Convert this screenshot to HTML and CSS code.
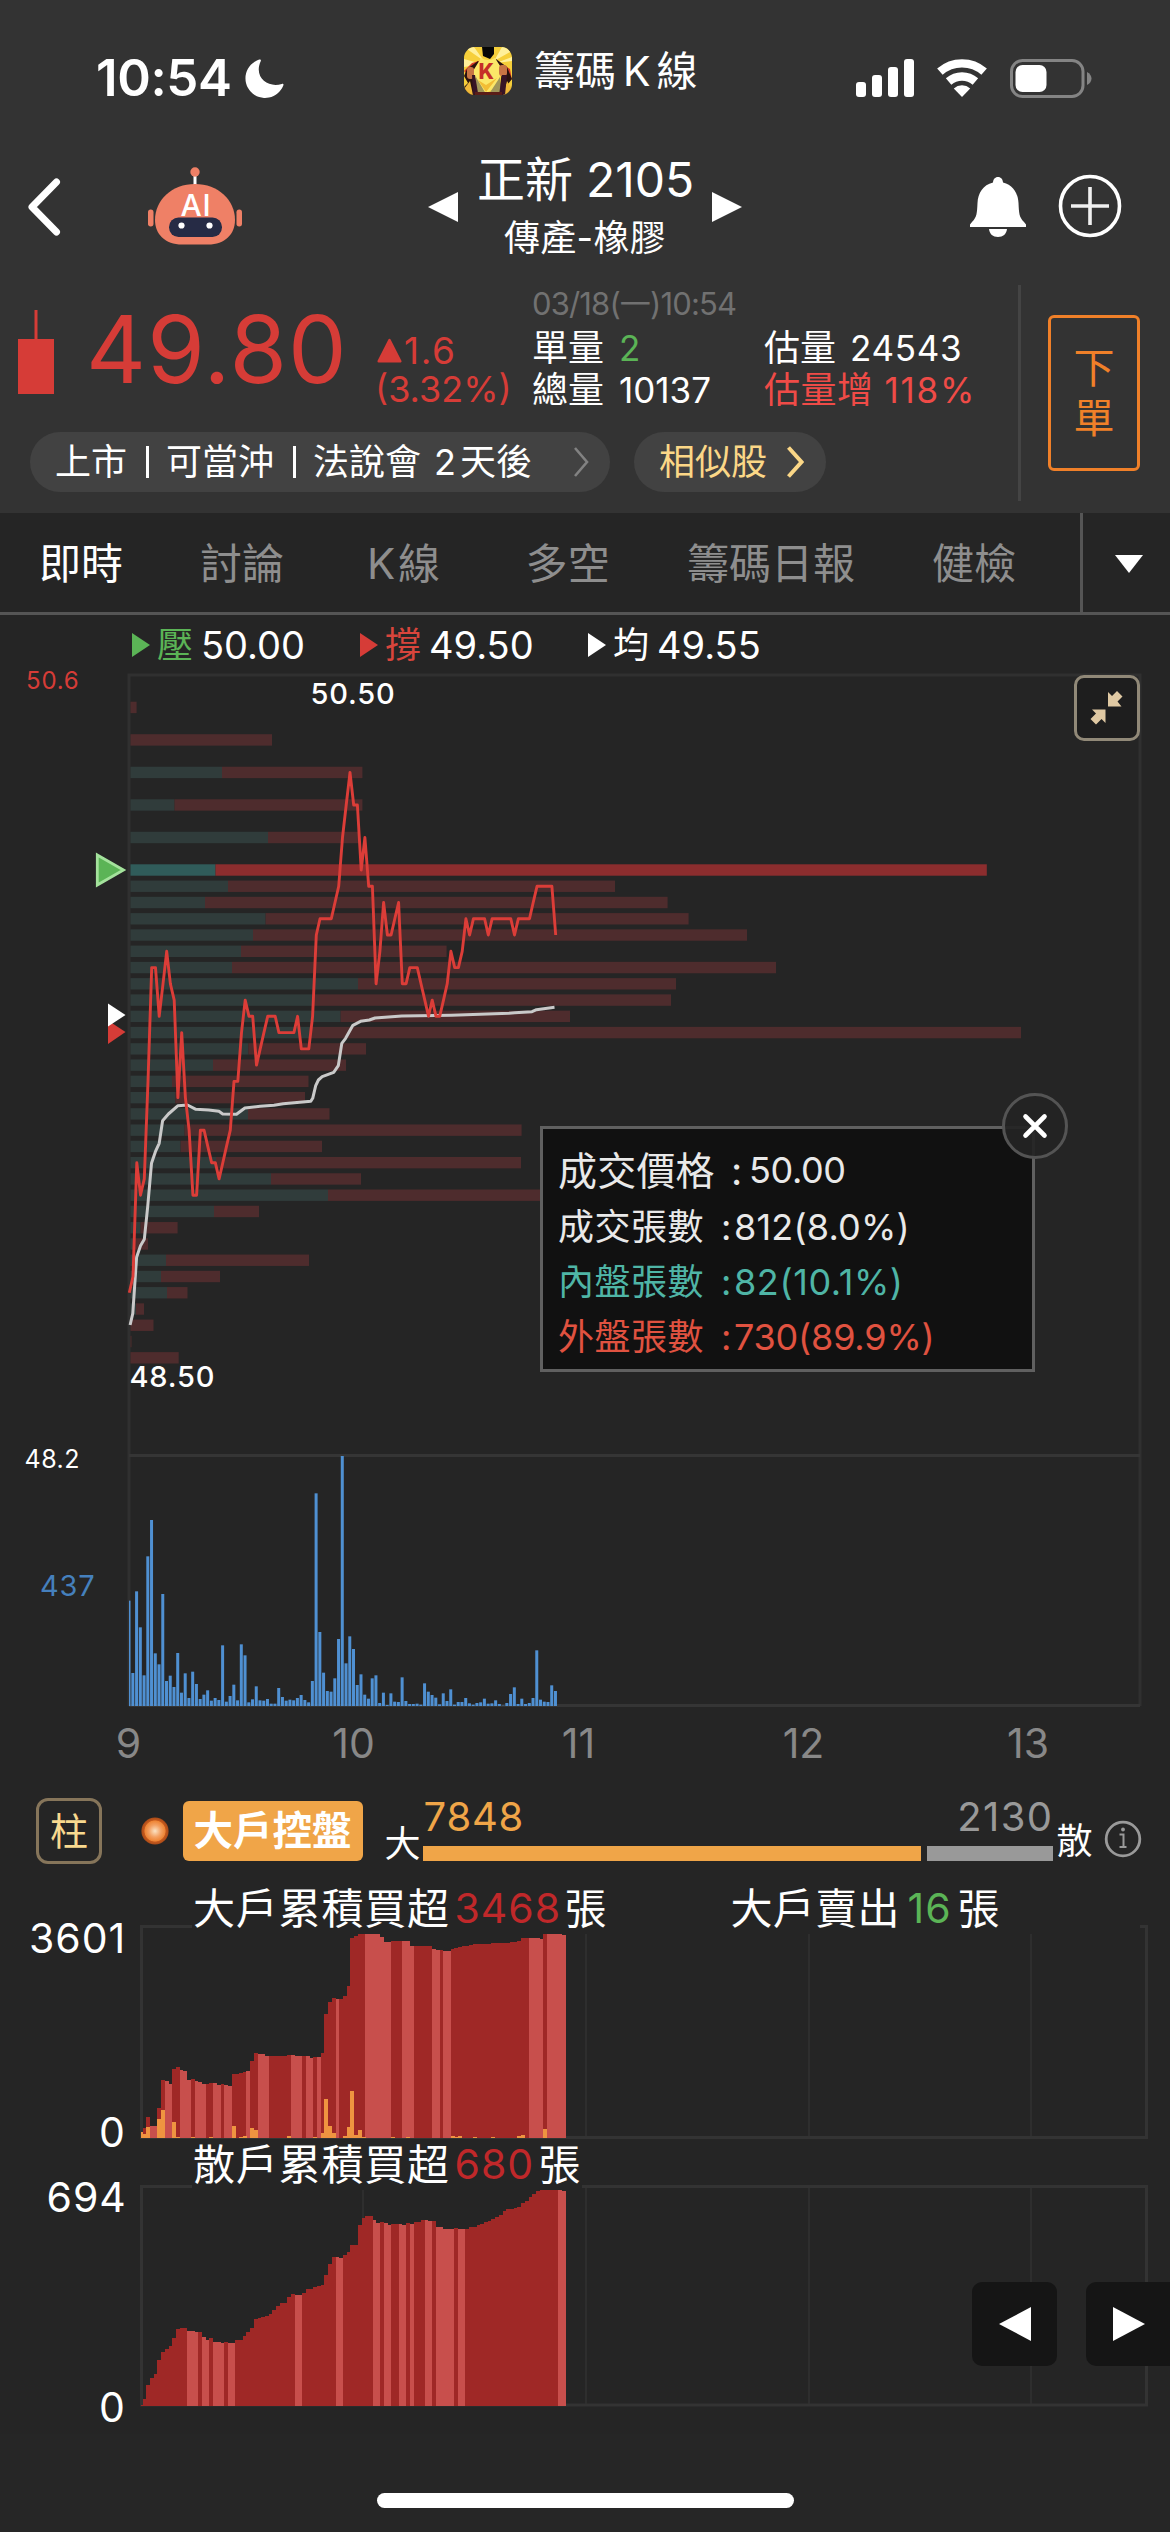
FILE: index.html
```html
<!DOCTYPE html>
<html lang="zh-Hant">
<head>
<meta charset="utf-8">
<title>正新 2105</title>
<link rel="stylesheet" href="styles.css">
</head>
<body>
<header class="top">
  <div class="status">
    <div class="status-left">
      <span class="clock">10:54</span>
      <svg class="moon" viewBox="0 0 39 39"><path d="M14.2.6A19.6 19.6 0 1 0 38.4 26.2C38.8 25.2 38 24.4 36.8 24.9 24 29.500 8 19 15.800 2 16.200 1 15.400.1 14.200.6Z" fill="#fff"/></svg>
    </div>
    <div class="app-name">
      <svg class="app-icon" viewBox="0 0 48 48">
        <defs><clipPath id="appClip"><rect width="48" height="48" rx="11"/></clipPath></defs>
        <g clip-path="url(#appClip)">
          <rect width="48" height="48" fill="#f6cf3a"/>
          <path d="M0 0H10L20 14ZM0 12L18 17 0 20ZM38 0H48V4L30 14ZM48 10V14L32 16Z" fill="#fff09a"/>
          <path d="M2 26L18 13 8 16 0 24ZM30 12L46 22 48 33 40 22Z" fill="#d63a25"/>
          <path d="M0 29L3 22 14 14 17 18 10 25 12 48H0V40L4 36ZM48 32L43 20 32 12 31 17 38 24 35 48H48V44L44 37Z" fill="#2a120f"/>
          <path d="M0 42L6 34 9 48H0ZM48 42L43 34 39 48H48Z" fill="#f0b93a"/>
          <path d="M17 11Q24 15 31 11L38 22 33 40 22 46 13 38 9 24Z" fill="#fbe768"/>
          <path d="M12 30L22 47H10ZM36 30L25 47H37Z" fill="#a0975a"/>
          <path d="M14 33L22 45 33 31 22 38Z" fill="#f2bd35"/>
          <path d="M18 0H30V7L26 12 19 9Z" fill="#070707"/>
          <rect x="3" y="20" width="7" height="12" rx="3" fill="#c87444"/>
          <rect x="35" y="18" width="8" height="11" rx="3" fill="#c87444"/>
          <path d="M38 28H43L41 48H35Z" fill="#371426"/><path d="M8 28H11L14 46 9 48Z" fill="#371426"/>
          <path d="M11 45H38V48H11Z" fill="#5a1d18"/>
          <text x="22.300" y="31.500" class="icon-k">K</text>
        </g>
      </svg>
      <span>籌碼<i>K</i>線</span>
    </div>
    <div class="status-right">
      <svg class="signal" viewBox="0 0 58 38"><g fill="#fff"><rect y="23" width="10" height="15" rx="3"/><rect x="16" y="16" width="10" height="22" rx="3"/><rect x="32" y="8" width="10" height="30" rx="3"/><rect x="48" width="10" height="38" rx="3"/></g></svg>
      <svg class="wifi" viewBox="0 0 50 38"><path d="M2.900 12.600A33.700 33.700 0 0 1 47.100 12.600M11.600 22.500A20.500 20.500 0 0 1 38.400 22.500" fill="none" stroke="#fff" stroke-width="8.400"/><path d="M25 38L16.800 29.400A12.500 12.500 0 0 1 33.200 29.400Z" fill="#fff"/></svg>
      <svg class="battery" viewBox="0 0 82 39"><rect x="1.500" y="1.500" width="71.500" height="36" rx="11" fill="none" stroke="#848484" stroke-width="3"/><rect x="5.500" y="6" width="31" height="27" rx="7" fill="#fff"/><path d="M77 13C83 16 83 23 77 26Z" fill="#848484"/></svg>
    </div>
  </div>

  <nav class="navbar">
    <svg class="back" viewBox="0 0 34 58"><path d="M29.500 4L5 29 29.500 54" fill="none" stroke="#fff" stroke-width="7" stroke-linecap="round" stroke-linejoin="round"/></svg>
    <svg class="robot" viewBox="0 0 94 78">
      <rect x="45.500" y="6" width="3" height="13" fill="#fff"/><circle cx="47" cy="5" r="4.700" fill="#ef8066"/>
      <path d="M47 17C70 17 87 33 87 53 87 67 77 77.500 60 77.500H34C17 77.500 7 67 7 53 7 33 24 17 47 17Z" fill="#ef8066"/>
      <rect y="42.500" width="5.500" height="17" rx="2.700" fill="#ef8066"/><rect x="88.500" y="42.500" width="5.500" height="17" rx="2.700" fill="#ef8066"/>
      <rect x="21" y="50.500" width="53" height="19.500" rx="9.500" fill="#262b45"/>
      <circle cx="33.500" cy="58.500" r="3.100" fill="#fff"/><circle cx="61.500" cy="58.500" r="3.100" fill="#fff"/>
      <text x="32.500" y="48.500" class="robot-ai">AI</text>
    </svg>
    <svg class="prev" viewBox="0 0 30 30"><path d="M30 0V30L0 15Z" fill="#fff"/></svg>
    <div class="title">
      <h1><span class="stock-name">正新</span><span>2105</span></h1>
      <p>傳產-橡膠</p>
    </div>
    <svg class="next" viewBox="0 0 30 30"><path d="M0 0V30L30 15Z" fill="#fff"/></svg>
    <svg class="bell" viewBox="0 0 58 60"><path d="M29 0C32 0 33.800 2.300 34 5.500 44 8 49 16 49.500 26 50 36 50 40 55 45L57 47.500V50H1V47.500L3 45C8 40 8 36 8.500 26 9 16 14 8 24 5.500 24.200 2.300 26 0 29 0ZM20 52H38C37.500 57 34 60 29 60 24 60 20.500 57 20 52Z" fill="#fff"/></svg>
    <svg class="add" viewBox="0 0 64 64"><circle cx="32" cy="32" r="29.500" fill="none" stroke="#fff" stroke-width="3.600"/><path d="M13 32H51M32 13V51" stroke="#f0f0f0" stroke-width="3.600"/></svg>
  </nav>

  <section class="quote">
    <div class="quote-main">
      <div class="quote-row">
        <svg class="candle" viewBox="0 0 36 84"><path d="M16.500 0H19.500V29H36V84H0V29H16.500Z" fill="#d63c37"/></svg>
        <span class="price">49.80</span>
        <div class="change">
          <div class="change-row"><svg viewBox="0 0 25 25"><path d="M12.500 2L23.300 23.300H1.700Z" fill="#d63c37" stroke="#d63c37" stroke-width="2.500" stroke-linejoin="round"/></svg><span class="diff">1.6</span></div>
          <div class="pct">(3.32%)</div>
        </div>
        <div class="info">
          <div class="date">03/18(一)10:54</div>
          <div class="info-row"><div><b>單量</b><span class="green">2</span></div><div><b>估量</b><span class="est">24543</span></div></div>
          <div class="info-row"><div><b>總量</b><span>10137</span></div><div class="rise"><b>估量增</b><span>118%</span></div></div>
        </div>
      </div>
      <div class="pills">
        <div class="pill tags"><span>上市</span><i class="bar"></i><span>可當沖</span><i class="bar"></i><span>法說會</span><span class="days">2</span><span>天後</span>
          <svg class="chev" viewBox="0 0 17 32"><path d="M2 2L14 16 2 30" fill="none" stroke="#828282" stroke-width="2.600"/></svg></div>
        <div class="pill similar"><span>相似股</span><svg class="chev" viewBox="0 0 17 32"><path d="M1.500 1.500L14.500 16 1.500 30.500" fill="none" stroke="#fbd787" stroke-width="4"/></svg></div>
      </div>
    </div>
    <div class="rule"></div>
    <button class="order">下<br>單</button>
  </section>
</header>

<nav class="tabs">
  <a class="active">即時</a><a>討論</a><a class="tab-k">K線</a><a>多空</a><a>籌碼日報</a><a class="last">健檢</a>
  <div class="more"><svg viewBox="0 0 28 18"><path d="M0 0H28L14 18Z" fill="#fff"/></svg></div>
</nav>

<div class="legend">
  <div class="legend-item"><svg viewBox="0 0 18 24"><path d="M0 0L18 12 0 24Z" fill="#5bb456"/></svg><b class="green">壓</b><span>50.00</span></div>
  <div class="legend-item"><svg viewBox="0 0 18 24"><path d="M0 0L18 12 0 24Z" fill="#d63c37"/></svg><b class="red">撐</b><span>49.50</span></div>
  <div class="legend-item"><svg viewBox="0 0 18 24"><path d="M0 0L18 12 0 24Z" fill="#fff"/></svg><b>均</b><span>49.55</span></div>
</div>

<section class="intraday">
  <svg class="plot" viewBox="0 673 1170 1117">
    <g fill="none" stroke="#303030" stroke-width="3">
      <path d="M129 1706V675H1140V1706"/>
    </g>
    <path d="M129 1455.500H1140M129 1705.500H1140" stroke="#353535" stroke-width="3"/>
    <g id="levels"></g>
    <g id="volume" fill="#4f90d2"></g>
    <path id="average" fill="none" stroke="#c9c9c9" stroke-width="3" stroke-linejoin="round"/>
    <path id="priceLine" fill="none" stroke="#dc3d38" stroke-width="2.900" stroke-linejoin="round"/>
    <path d="M108 1020.500L125.500 1032 108 1044Z" fill="#d63c37"/>
    <path d="M108 1003.500L125.500 1015 108 1026.500Z" fill="#fff"/>
    <path d="M97.300 855L123.500 870 97.300 885Z" fill="#5bb456" stroke="#a4e29c" stroke-width="2.800"/>
    <text class="s24 red" x="26" y="689">50.6</text>
    <text class="s29" x="310.500" y="703.500">50.50</text>
    <text class="s29" x="129.500" y="1386.500">48.50</text>
    <text class="s25" x="24.500" y="1467.500">48.2</text>
    <text class="s29 blue" x="40" y="1596">437</text>
    <g class="hours"><text x="128.500" y="1758">9</text><text x="353.500" y="1758">10</text><text x="578.500" y="1758">11</text><text x="803.500" y="1758">12</text><text x="1028" y="1758">13</text></g>
  </svg>
  <button class="shrink"><svg viewBox="0 0 34 34"><g fill="#e0c9a3"><path d="M18 1L22 5 27 0 32.500 5.500 27.500 10.500 31.500 15.500H18Z"/><path d="M15.500 32L11.500 28 6 33.500.5 28 6 22.500 2 18.500H15.500Z"/></g></svg></button>
  <div class="tip">
    <div class="tip-row first"><b>成交價格</b><i>:</i><span>50.00</span></div>
    <div class="tip-row"><b>成交張數</b><i>:</i><span>812(8.0%)</span></div>
    <div class="tip-row teal"><b>內盤張數</b><i>:</i><span class="inner">82(10.1%)</span></div>
    <div class="tip-row coral"><b>外盤張數</b><i>:</i><span>730(89.9%)</span></div>
    <button class="close"><svg viewBox="0 0 26 26"><path d="M3.500 3.500L22.500 22.500M22.500 3.500L3.500 22.500" stroke="#fff" stroke-width="4.600" stroke-linecap="round"/></svg></button>
  </div>
</section>

<section class="control">
  <button class="bars-btn">柱</button>
  <svg class="dot" viewBox="0 0 28 28"><defs><radialGradient id="glow"><stop offset="0" stop-color="#fbe3c4"/><stop offset=".45" stop-color="#f3a062"/><stop offset=".75" stop-color="#ee8434"/><stop offset=".8" stop-color="#c5591d"/><stop offset="1" stop-color="#a84a18"/></radialGradient></defs><circle cx="14" cy="14" r="13.600" fill="url(#glow)"/></svg>
  <span class="badge">大戶控盤</span>
  <span class="side big">大</span>
  <div class="meter">
    <div class="meter-values"><span class="amber">7848</span><span class="gray">2130</span></div>
    <div class="meter-bar"><i class="fill-big"></i><i class="fill-small"></i></div>
  </div>
  <span class="side small">散</span>
  <svg class="info-icon" viewBox="0 0 38 38"><circle cx="19" cy="19" r="16.800" fill="none" stroke="#9a9a9a" stroke-width="2.800"/><circle cx="19" cy="9.500" r="1.900" fill="#9a9a9a"/><path d="M15.500 14.500H19.500V26.500M15.500 27H22.500" fill="none" stroke="#9a9a9a" stroke-width="2"/></svg>
</section>

<section class="flows">
  <svg class="plot" viewBox="0 1872 1170 562">
    <g fill="none" stroke="#333" stroke-width="3">
      <path d="M192 1926.500H141.500V2137.500H1146.500V1926.500H1140"/>
      <path d="M192 2186.500H141.500V2405H1146.500V2186.500H582"/>
    </g>
    <path d="M586 1934V2136M809 1934V2136M1031 1934V2136M363 2190V2404M586 2188V2404M809 2188V2404M1031 2188V2404" stroke="#303030" stroke-width="1.800"/>
    <g id="bigFlow" shape-rendering="crispEdges"></g>
    <g id="smallFlow" shape-rendering="crispEdges"></g>
    <g class="s42">
      <text x="193" y="1924" textLength="256">大戶累積買超</text>
      <text x="564.500" y="1924">張</text>
      <text x="730.500" y="1924" textLength="169">大戶賣出</text>
      <text x="957.500" y="1924">張</text>
      <text x="193" y="2180" textLength="256">散戶累積買超</text>
      <text x="538.500" y="2180">張</text>
    </g>
    <g class="s41">
      <text class="crimson" x="454.500" y="1923">3468</text>
      <text class="green" x="907.500" y="1923">16</text>
      <text class="crimson" x="454.500" y="2179">680</text>
      <text x="29" y="1953">3601</text>
      <text x="99" y="2146.500">0</text>
      <text x="46.500" y="2212">694</text>
      <text x="99" y="2421.500">0</text>
    </g>
  </svg>
  <div class="pager">
    <button><svg viewBox="0 0 32 34"><path d="M32 0V34L0 17Z" fill="#fff"/></svg></button>
    <button><svg viewBox="0 0 32 34"><path d="M0 0V34L32 17Z" fill="#fff"/></svg></button>
  </div>
</section>

<footer class="home"><i></i></footer>
<script src="charts.js"></script>
</body>
</html>
```
FILE: styles.css
```css
* { box-sizing: border-box; margin: 0; padding: 0; }
html, body { width: 1170px; }
body {
  height: 2532px; overflow: hidden; background: #252525; color: #fff;
  font-family: Inter, "Noto Sans CJK TC", sans-serif; font-weight: 400;
  display: flex; flex-direction: column;
}
svg { display: block; flex: none; }
i { font-style: normal; }
b { font-weight: 400; }
button { font: inherit; color: inherit; background: none; border: 0; }
span, b { white-space: nowrap; }

.green { color: #5bb456; fill: #5bb456; }
.red { color: #d9453c; fill: #d63c37; }

.top { background: #333; height: 513px; flex: none; }

/* status bar */
.status { height: 156px; display: grid; grid-template-columns: 464px 392px 1fr; align-items: center; }
.status-left { display: flex; align-items: center; padding-left: 96px; gap: 11px; }
.clock { width: 138px; font-size: 51px; line-height: 60px; font-weight: 600; letter-spacing: -.4px; }
.moon { width: 39px; height: 39px; }
.app-name { display: flex; align-items: center; gap: 22px; margin-bottom: 15px; font-size: 41px; line-height: 48px; }
.app-icon { width: 48px; height: 48px; }
.app-name i { margin: 0 6px 0 7px; }
.icon-k { font: 800 21px Inter, sans-serif; text-anchor: middle; fill: #c62f28; }
.status-right { display: flex; align-items: center; }
.signal { width: 58px; height: 38px; }
.wifi { width: 50px; height: 38px; margin-left: 22.500px; }
.battery { width: 82px; height: 39px; margin-left: 23px; }

/* title bar */
.navbar { height: 104px; display: flex; align-items: center; }
.back { width: 34px; height: 58px; margin: 0 0 3px 27px; }
.robot { width: 94px; height: 78px; margin: 0 0 5px 87px; }
.robot-ai { font: 500 30px Inter, sans-serif; fill: #fff; letter-spacing: .7px; }
.prev { width: 30px; height: 30px; margin: 0 0 3px 186px; }
.title { width: 254px; text-align: center; }
.title h1 { font-size: 48px; line-height: 60px; font-weight: 400; display: flex; padding-left: 19px; gap: 13px; }
.title p { font-size: 36px; line-height: 56px; letter-spacing: .3px; }
.next { width: 30px; height: 30px; margin-bottom: 3px; }
.bell { width: 58px; height: 60px; margin: 0 0 2px 227px; }
.add { width: 64px; height: 64px; margin: 0 0 4px 31px; }

/* quote */
.quote { height: 253px; display: grid; grid-template-columns: 1018px 3px 1fr; padding-top: 24px; }
.quote-row { height: 148px; display: flex; }
.candle { width: 36px; height: 84px; margin: 26px 0 0 18px; }
.price { width: 291px; margin-left: 32px; font-size: 93px; line-height: 130px; letter-spacing: 1.100px; color: #d63c37; }
.change { width: 155px; padding-top: 47px; color: #d63c37; font-size: 36px; line-height: 39px; }
.change-row { display: flex; align-items: center; gap: 2px; }
.change-row svg { width: 25px; height: 25px; }
.diff { font-size: 37px; letter-spacing: 1.600px; }
.pct { margin-left: -2px; }
.date { height: 42.500px; font-size: 31px; line-height: 39px; letter-spacing: -.85px; color: #717171; white-space: nowrap; }
.info-row { display: flex; height: 42.500px; line-height: 42.500px; font-size: 35px; }
.info-row > div { display: flex; gap: 15px; width: 232px; }
.info-row > div + div { gap: 14px; }
.info-row b { font-size: 36px; }
.est { letter-spacing: .7px; }
.info-row .rise { color: #ef4b47; gap: 11px; letter-spacing: .5px; }
.rise span { letter-spacing: 1.800px; }
.pills { display: flex; padding-left: 30px; gap: 24px; }
.pill { height: 60px; border-radius: 30px; background: #424242; display: flex; align-items: center; font-size: 36px; line-height: 60px; padding-left: 25px; }
.tags { width: 580px; }
.bar { width: 3px; height: 32px; margin: 0 17px 0 19px; background: #fff; }
.days { margin: 0 4px 0 13px; }
.tags .chev { margin-left: 41px; }
.chev { width: 17px; height: 32px; }
.similar { width: 192px; color: #fbd787; }
.similar .chev { margin-left: 20px; }
.rule { height: 216px; margin-top: 1px; background: #444; }
.order { width: 92px; height: 156px; margin: 31px 0 0 27px; border: 3px solid #f08029; border-radius: 6px; color: #f08029; font-size: 41px; line-height: 50px; }

/* tabs */
.tabs { height: 102px; flex: none; display: flex; align-items: center; padding-left: 39px; border-bottom: 3px solid #555; font-size: 42px; line-height: 96px; color: #8e8e8e; }
.tabs a { padding-top: 3px; margin-right: 77px; white-space: nowrap; }
.tabs .active { color: #fff; }
.tabs .tab-k { margin: 0 83px 0 6px; letter-spacing: 2.800px; }
.tabs .last { margin-right: 0; }
.more { flex: none; margin-left: auto; width: 90px; height: 99px; border-left: 3px solid #555; padding: 42px 0 0 32px; }
.more svg { width: 28px; height: 18px; }

/* reference prices */
.legend { height: 58px; flex: none; display: flex; align-items: center; padding: 2px 0 0 132px; font-size: 38px; line-height: 50px; }
.legend-item { width: 228px; display: flex; align-items: center; }
.legend-item svg { width: 18px; height: 24px; }
.legend-item b { font-size: 36px; margin: 0 8px 0 7px; }

/* intraday chart */
.intraday { position: relative; height: 1117px; flex: none; }
.plot { width: 1170px; height: 100%; overflow: visible; }
text { fill: #fff; }
text.green { fill: #5bb456; }
text.red { fill: #d63c37; }
text.blue { fill: #4580bd; font-weight: 400; }
.s24 { font-size: 24px; letter-spacing: .8px; }
.s25 { font-size: 25px; letter-spacing: .5px; }
.s29 { font-size: 29px; font-weight: 500; letter-spacing: .8px; }
.hours { font-size: 41px; text-anchor: middle; }
.hours text { fill: #888; }
.shrink { position: absolute; left: 1074px; top: 2px; width: 66px; height: 66px; border: 3px solid #918978; border-radius: 10px; background: #1e1e1e; padding: 13px; }
.shrink svg { width: 34px; height: 34px; }
.tip { position: absolute; left: 540px; top: 453px; width: 495px; height: 246px; background: #111; border: 3px solid #606060; padding-left: 15px; color: #e9e9e9; }
.tip-row { display: grid; grid-template-columns: 163px 13px auto; justify-content: start; align-items: center; height: 55px; font-size: 36px; line-height: 55px; letter-spacing: .2px; }
.tip-row.first { grid-template-columns: 173px 18px auto; height: 71px; padding-top: 12px; font-size: 39px; }
.tip-row.first span { font-size: 36px; letter-spacing: -.4px; }
.tip-row.teal { color: #4fb5a6; }
.tip-row.teal .inner { letter-spacing: .6px; }
.tip-row.coral { color: #e05240; }
.tip-row.coral span { letter-spacing: -.2px; }
.tip-row:not(.first) b { letter-spacing: .5px; }
.close { position: absolute; right: -36px; top: -36px; width: 66px; height: 66px; border-radius: 50%; border: 3px solid #545454; background: rgba(36, 36, 36, .93); padding: 17px; }
.close svg { width: 26px; height: 26px; }

/* holder control */
.control { height: 82px; flex: none; display: flex; align-items: flex-start; padding-left: 36px; }
.bars-btn { width: 66px; height: 66px; margin-top: 8px; border: 3px solid #86755a; border-radius: 12px; color: #f8d98f; font-size: 38px; line-height: 60px; }
.dot { width: 28px; height: 28px; margin: 27px 14px 0 38.500px; }
.badge { width: 180px; height: 60px; margin-top: 11px; border-radius: 6px; background: #f0a548; text-align: center; font-size: 39.500px; font-weight: 700; line-height: 60px; }
.side { font-size: 36px; line-height: 40px; }
.big { margin: 34px 2px 0 22px; }
.small { margin: 31px 0 0 4px; }
.meter { width: 630px; }
.meter-values { display: flex; justify-content: space-between; font-size: 40px; line-height: 54px; }
.amber { color: #f0a548; letter-spacing: .8px; padding-left: 1px; }
.gray { color: #999; letter-spacing: 1.400px; margin-right: -1px; }
.meter-bar { display: flex; gap: 6px; margin-top: 2px; height: 15px; }
.fill-big { width: 498px; background: #f0a548; }
.fill-small { flex: 1; background: #999; }
.info-icon { width: 38px; height: 38px; margin: 30px 0 0 11px; }

/* cumulative flows */
.flows { position: relative; height: 562px; flex: none; }
.s42 { font-size: 42px; }
.s41 { font-size: 41px; letter-spacing: 1px; }
text.crimson { fill: #c0282a; }
.pager { position: absolute; right: -1px; top: 410px; display: flex; gap: 29px; }
.pager button { width: 85px; height: 84px; border-radius: 10px; background: #151515; display: grid; place-items: center; }
.pager button:last-child { border-radius: 10px 0 0 10px; }
.pager svg { width: 32px; height: 34px; }

.home { flex: 1; background: #262626; padding: 59px 0 0 377px; }
.home i { display: block; width: 417px; height: 15px; border-radius: 8px; background: #fff; }
```
FILE: charts.js
```js
const NS = 'http://www.w3.org/2000/svg';
const LEFT = 130.5;
const MINUTE = 3.74;
const TICK = 16.26;

function rect(parent, x, y, w, h, fill) {
  const r = document.createElementNS(NS, 'rect');
  r.setAttribute('x', x); r.setAttribute('y', y);
  r.setAttribute('width', w); r.setAttribute('height', h);
  if (fill) r.setAttribute('fill', fill);
  parent.appendChild(r);
}

// price level in ticks below 50.00, sell-side end, total end
const levels = [
  [-10, 0, 136.6], [-8, 0, 272], [-6, 222, 362.4], [-4, 174.5, 362.4], [-2, 268, 360],
  [0, 215.5, 986.8], [1, 228, 615], [2, 205, 667.6], [3, 265.6, 688.6], [4, 253, 747],
  [5, 241, 446.6], [6, 232, 776], [7, 358, 676], [8, 312, 671], [9, 340.6, 570],
  [10, 312, 1021], [11, 248.4, 366], [12, 213, 346], [13, 172, 308.5], [14, 175.3, 305],
  [15, 248, 329.5], [16, 184.5, 521.6], [17, 180.6, 322], [18, 216, 521], [19, 271, 361],
  [20, 328, 600], [21, 214, 259], [22, 140.5, 177.6], [23, 134, 148], [24, 166, 309],
  [25, 161, 220], [26, 167, 187.5], [27, 136, 144], [28, 0, 153.5], [29, 0, 131.5], [30, 0, 178.7]
];
const levelBox = document.getElementById('levels');
for (const [tick, sell, total] of levels) {
  const y = 870 + tick * TICK - 5.7;
  const hot = tick === 0;
  const split = Math.max(sell, LEFT);
  if (sell) rect(levelBox, LEFT, y, split - LEFT, 11.4, hot ? '#305c5a' : '#303c3b');
  rect(levelBox, split, y, total - split, 11.4, hot ? '#8c2d2e' : '#4e2c2d');
}

// traded price per minute, in ticks below 50.00
const price = [26,25,18,20,19,13,6,6,9,7,5,7,8,14,10,14,16,20,20,16,16,17,18,18,19,18,17,16,13,13,
  10,8,9,9,12,11,10,9,9,9,10,10,10,10,10,9,11,11,11,9,4,3,3,3,3,2,1,-2,-4,-6,-4,-4,0,-2,1,1,7,5,2,4,4,3,2,7,7,6,6,6,
  7,8,9,8,9,9,8,7,5,6,6,5,3,4,3,3,3,3,4,3,3,3,3,3,3,4,3,3,3,3,2,1,1,1,1,1,4];
document.getElementById('priceLine').setAttribute('d',
  'M' + price.map((p, i) => (129.3 + i * MINUTE).toFixed(1) + ' ' + (870 + p * TICK).toFixed(1)).join('L'));

const average = [[340,975],[347,940],[357,772],[367,737],[377,718],[386,620],[396,490],[406,455],[416,430],[425,362],
  [440,342],[465,317],[490,315],[512,328],[545,330],[572,334],[582,342],[618,343],[640,324],[680,319],[716,316],[740,311],
  [812,304],[817,295],[825,257],[832,240],[842,230],[872,217],[884,197],[893,130],[903,115],[922,76],[942,64],[965,60],
  [980,54],[1050,48],[1180,46],[1330,40],[1345,38],[1390,35],[1402,29],[1449,22]];
document.getElementById('average').setAttribute('d',
  'M' + average.map(([x, y]) => (x / 2.613).toFixed(1) + ' ' + (1000 + y / 3).toFixed(1)).join('L'));

const volume = [316,99,344,236,92,449,558,158,125,336,75,91,57,159,40,98,24,103,66,21,34,47,16,24,18,182,13,30,64,17,
  185,152,11,20,59,17,16,21,7,7,54,27,16,19,17,24,33,18,11,75,638,222,100,45,43,83,201,750,128,209,171,63,95,34,22,83,
  92,9,40,3,38,13,12,86,15,6,6,7,4,68,43,33,25,5,38,15,50,4,12,12,24,8,4,9,11,22,7,8,17,6,1,9,36,56,6,22,6,9,24,167,19,
  13,12,62,45];
const volumeBox = document.getElementById('volume');
volume.forEach((v, i) => {
  const x = 129 + i * MINUTE - (i ? 1.4 : 0);
  rect(volumeBox, x, 1706 - v / 3, i ? 3 : 1.5, v / 3);
});

// one bar per minute: L marks a falling minute, D a rising one
function flow(id, tops, shades, bottom, offset) {
  const box = document.getElementById(id);
  tops.forEach((t, i) => {
    const x = i ? 142.55 + 3.712 * (i - 1) : 141;
    const x2 = 142.55 + 3.712 * i;
    const y = offset + t / 3;
    rect(box, x, y, x2 - x, bottom - y, shades[i] === 'L' ? '#c84f4c' : '#9f2826');
  });
}
function shadeMap(ranges) {
  const s = Array(115).fill('D');
  for (const [a, b] of ranges) for (let i = a; i <= b; i++) s[i] = 'L';
  return s;
}
const bigTops = [1087,1075,1041,1068,1069,1015,930,933,942,896,892,899,902,930,926,933,935,941,941,939,940,945,943,946,947,
  911,911,909,905,903,873,850,852,852,859,859,859,859,859,859,854,856,857,857,858,858,863,862,862,849,732,697,683,686,686,
  678,647,505,499,492,492,492,492,492,492,500,516,516,512,512,512,513,513,528,528,528,528,528,528,537,540,541,543,543,538,
  534,530,528,527,526,522,522,522,522,521,519,519,518,518,518,517,517,512,504,503,503,505,505,507,492,492,492,492,492,494];
flow('bigFlow', bigTops, shadeMap([[3,4],[7,8],[11,13],[15,17],[20,21],[23,24],[29,29],[32,34],[41,43],[45,46],[48,48],
  [53,53],[61,67],[71,73],[79,80],[82,83],[105,108],[110,114]]), 2138, 1770);

// large-holder trade size per minute
const spikes = {0:1087,1:1091,2:1070,5:1047,6:1020,9:1057,10:1100,14:1100,19:1101,25:1068,27:1100,28:1098,30:1075,31:1080,
  40:1098,47:1101,49:1090,50:988,51:1069,52:1090,55:1097,56:1072,57:963,58:1095,59:1079,60:1100,68:1100,72:1100,84:1097,
  85:1100,86:1098,90:1101,95:1101,102:1098,103:1095,109:1077};
const bigBox = document.getElementById('bigFlow');
for (const [i, t] of Object.entries(spikes)) {
  const y = 1770 + t / 3;
  rect(bigBox, +i ? 142.55 + 3.712 * (i - 1) : 141, y, +i ? 4 : 2, 2138 - y, '#ef9440');
}

const smallTops = [825,807,766,744,732,690,667,656,648,625,597,594,594,602,602,607,606,621,630,625,636,636,638,636,639,639,
  631,631,618,606,594,568,565,562,557,552,540,527,520,520,502,492,494,495,489,478,476,470,468,465,436,403,380,381,384,375,
  367,346,344,286,264,259,259,270,280,275,280,286,282,282,283,285,280,282,276,275,269,270,273,273,290,292,297,297,297,295,
  298,298,296,292,290,286,283,275,272,266,261,254,243,237,236,235,230,219,212,201,192,184,180,180,180,180,180,180,182];
flow('smallFlow', smallTops, shadeMap([[13,15],[17,18],[20,22],[24,25],[42,43],[53,54],[63,64],[66,67],[70,71],[73,73],
  [77,78],[80,84],[86,87],[113,114]]), 2406, 2130);
```
